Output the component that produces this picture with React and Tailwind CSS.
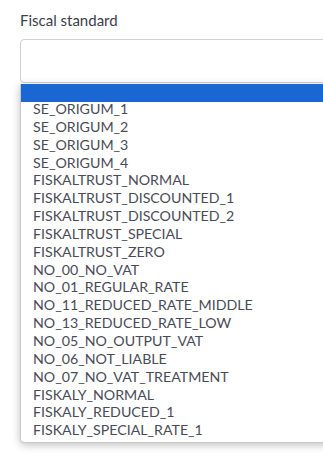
const options = [
  'SE_ORIGUM_1',
  'SE_ORIGUM_2',
  'SE_ORIGUM_3',
  'SE_ORIGUM_4',
  'FISKALTRUST_NORMAL',
  'FISKALTRUST_DISCOUNTED_1',
  'FISKALTRUST_DISCOUNTED_2',
  'FISKALTRUST_SPECIAL',
  'FISKALTRUST_ZERO',
  'NO_00_NO_VAT',
  'NO_01_REGULAR_RATE',
  'NO_11_REDUCED_RATE_MIDDLE',
  'NO_13_REDUCED_RATE_LOW',
  'NO_05_NO_OUTPUT_VAT',
  'NO_06_NOT_LIABLE',
  'NO_07_NO_VAT_TREATMENT',
  'FISKALY_NORMAL',
  'FISKALY_REDUCED_1',
  'FISKALY_SPECIAL_RATE_1',
]

export default function App() {
  return (
    <div
      className="w-[323px] h-[457px] overflow-hidden bg-white"
      style={{ fontFamily: 'Lato, "Open Sans", sans-serif' }}
    >
      <div className="pl-5 pt-[10px]">
        <label className="block text-[15px] leading-5 text-[#3b404c]">Fiscal standard</label>

        {/* select box */}
        <div className="mt-[9px] w-[330px] h-[44px] rounded-[4px] border border-[#cfd0d6] bg-white" />

        {/* open options list */}
        <div className="w-[330px] mt-px rounded-b-[4px] border-l border-b border-[#c9c9c9] bg-white shadow-[0_2px_8px_rgba(0,0,0,0.25)] pb-[3px]">
          <div className="h-[18px] bg-[#1a66d3]" />
          <div className="-mt-[2px]">
            {options.map((o) => (
              <div key={o} className="pl-3 text-[14.2px] leading-[17.85px] text-[#4a4b58] whitespace-nowrap">
                {o}
              </div>
            ))}
          </div>
        </div>
      </div>
    </div>
  )
}
